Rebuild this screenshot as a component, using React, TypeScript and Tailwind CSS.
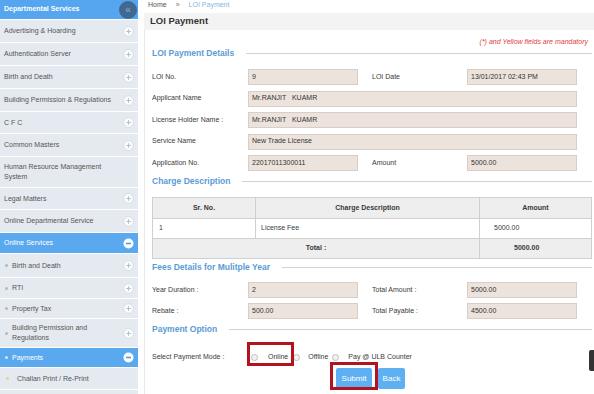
import React from 'react';

type Kind = 'top' | 'sub' | 'active' | 'activeSub' | 'leaf';
type Item = { label: string; h: string; kind: Kind; icon?: 'plus' | 'minus'; wrap?: string };

const items: Item[] = [
  { label: 'Advertising & Hoarding', h: 'h-[23px]', kind: 'top', icon: 'plus' },
  { label: 'Authentication Server', h: 'h-[23px]', kind: 'top', icon: 'plus' },
  { label: 'Birth and Death', h: 'h-[23px]', kind: 'top', icon: 'plus' },
  { label: 'Building Permission & Regulations', h: 'h-[23px]', kind: 'top', icon: 'plus' },
  { label: 'C F C', h: 'h-[22px]', kind: 'top', icon: 'plus' },
  { label: 'Common Masters', h: 'h-[23px]', kind: 'top', icon: 'plus' },
  { label: 'Human Resource Management System', h: 'h-[31px]', kind: 'top', wrap: 'max-w-[104px]' },
  { label: 'Legal Matters', h: 'h-[22px]', kind: 'top', icon: 'plus' },
  { label: 'Online Departmental Service', h: 'h-[23px]', kind: 'top', icon: 'plus' },
  { label: 'Online Services', h: 'h-[21px]', kind: 'active', icon: 'minus' },
  { label: 'Birth and Death', h: 'h-[24px]', kind: 'sub', icon: 'plus' },
  { label: 'RTI', h: 'h-[21px]', kind: 'sub', icon: 'plus' },
  { label: 'Property Tax', h: 'h-[20px]', kind: 'sub', icon: 'plus' },
  { label: 'Building Permission and Regulations', h: 'h-[29px]', kind: 'sub', icon: 'plus', wrap: 'max-w-[100px]' },
  { label: 'Payments', h: 'h-[20px]', kind: 'activeSub', icon: 'minus' },
  { label: 'Challan Print / Re-Print', h: 'h-[22px]', kind: 'leaf' },
];

function PlusIcon() {
  return (
    <svg width="11" height="11" viewBox="0 0 11 11" className="shrink-0">
      <circle cx="5.5" cy="5.5" r="4.8" fill="#fbfcfd" stroke="#d3d9df" strokeWidth="0.8" />
      <path d="M5.5 3.2v4.6M3.2 5.5h4.6" stroke="#b3bac2" strokeWidth="0.9" />
    </svg>
  );
}

function MinusIcon() {
  return (
    <svg width="11" height="11" viewBox="0 0 11 11" className="shrink-0">
      <circle cx="5.5" cy="5.5" r="5" fill="#ffffff" />
      <path d="M3 5.5h5" stroke="#4d9ee8" strokeWidth="1.6" />
    </svg>
  );
}

function SideRow({ item }: { item: Item }) {
  const active = item.kind === 'active' || item.kind === 'activeSub';
  return (
    <div
      className={`${item.h} flex items-center border-b border-white pr-[4px] leading-[10px] ${
        active ? 'bg-[#5aa9ef] text-white' : 'text-[#555]'
      } ${item.kind === 'leaf' ? 'pl-[6px]' : item.kind === 'top' || item.kind === 'active' ? 'pl-[4px]' : 'pl-[5px]'}`}
    >
      {(item.kind === 'sub' || item.kind === 'activeSub') && (
        <span className={`w-[3px] h-[3px] rounded-full mr-[4px] shrink-0 ${active ? 'bg-[#cfe5fa]' : 'bg-[#a9bccd]'}`} />
      )}
      {item.kind === 'leaf' && <span className="w-[3px] h-[3px] rounded-full mr-[8px] shrink-0 bg-[#e2d58f]" />}
      <div className="flex-1">
        <div className={item.wrap ?? ''}>{item.label}</div>
      </div>
      {item.icon === 'plus' && <PlusIcon />}
      {item.icon === 'minus' && <MinusIcon />}
    </div>
  );
}

function Sidebar() {
  return (
    <aside className="w-[138px] shrink-0 h-full bg-[#e5eaf0] flex flex-col">
      <div className="h-[20px] border-b border-white bg-[#55a6ee] flex items-center justify-between pl-[4px] pr-[1px]">
        <span className="font-bold text-white text-[7px]">Departmental Services</span>
        <span className="w-[18px] h-[18px] rounded-full bg-[#406890] flex items-center justify-center text-[#8fb0d0] text-[10px] leading-none">
          «
        </span>
      </div>
      {items.map((it, i) => (
        <SideRow key={i} item={it} />
      ))}
    </aside>
  );
}

function Section({ title, className = '' }: { title: string; className?: string }) {
  return (
    <div className={`flex items-center h-[12px] ${className}`}>
      <span className="text-[8.5px] font-bold text-[#5b9bd5] whitespace-nowrap">{title}</span>
      <div className="flex-1 ml-[12px] border-t border-[#d2d2d2]" />
    </div>
  );
}

function Field({ value, wide }: { value: string; wide?: boolean }) {
  return (
    <div
      className={`h-[16px] bg-[#ede3dd] border border-[#d9cdc7] pl-[3px] flex items-center whitespace-pre text-[7px] text-[#333] ${
        wide ? 'w-[329px]' : 'w-[110px]'
      }`}
    >
      {value}
    </div>
  );
}

function Row({ label, value, label2, value2, wide }: { label: string; value: string; label2?: string; value2?: string; wide?: boolean }) {
  return (
    <div className="flex items-center h-[16px]">
      <span className="w-[96px] shrink-0">{label}</span>
      <Field value={value} wide={wide} />
      {label2 && (
        <>
          <span className="w-[14px]" />
          <span className="w-[95px] shrink-0">{label2}</span>
          <Field value={value2 ?? ''} />
        </>
      )}
    </div>
  );
}

function Radio() {
  return <span className="w-[7px] h-[7px] rounded-full border border-[#bdbdbd] bg-[#f1f1f1] shrink-0" />;
}

export default function App() {
  return (
    <div className="relative flex w-[594px] h-[394px] overflow-hidden bg-white font-['Liberation_Sans',Arial,sans-serif] text-[7px] text-[#3a3a3a]">
      <Sidebar />
      <main className="flex-1 ml-[6px] flex flex-col">
        <div className="h-[11px] pl-[4px] flex items-center text-[#555]">
          Home<span className="mx-[9px] text-[#777]">»</span>
          <span className="text-[#86b6e2]">LOI Payment</span>
        </div>
        <div className="mt-[2px] h-[17px] bg-[#f3f3f3] pl-[6px] flex items-center text-[9.5px] font-bold text-[#333]">
          LOI Payment
        </div>
        <div className="flex-1 border-l border-[#e8e8e8] pl-[7px] pr-[2px] pt-[7px] flex flex-col">
          <div className="h-[10px] leading-[10px] text-right italic text-[#e03a44] pr-[4px]">
            (*) and Yellow fields are mandatory
          </div>
          <Section title="LOI Payment Details" />
          <div className="mt-[10px] flex flex-col gap-[5.5px]">
            <Row label="LOI No." value="9" label2="LOI Date" value2="13/01/2017 02:43 PM" />
            <Row label="Applicant Name" value="Mr.RANJIT   KUAMR" wide />
            <Row label="License Holder Name :" value="Mr.RANJIT   KUAMR" wide />
            <Row label="Service Name" value="New Trade License" wide />
            <Row label="Application No." value="22017011300011" label2="Amount" value2="5000.00" />
          </div>
          <Section title="Charge Description" className="mt-[4px]" />
          <table className="mt-[10px] w-full border-collapse text-[7px]">
            <tbody>
              <tr className="h-[21px] bg-[#eeeeee] font-bold">
                <td className="w-[103px] border border-[#cfcfcf] text-center">Sr. No.</td>
                <td className="w-[224px] border border-[#cfcfcf] text-center">Charge Description</td>
                <td className="border border-[#cfcfcf] text-center">Amount</td>
              </tr>
              <tr className="h-[20px] bg-white">
                <td className="border border-[#cfcfcf] pl-[6px]">1</td>
                <td className="border border-[#cfcfcf] pl-[5px]">License Fee</td>
                <td className="border border-[#cfcfcf] pl-[14px]">5000.00</td>
              </tr>
              <tr className="h-[20px] bg-[#eeeeee] font-bold">
                <td colSpan={2} className="border border-[#cfcfcf] text-center">Total :</td>
                <td className="border border-[#cfcfcf] pl-[34px]">5000.00</td>
              </tr>
            </tbody>
          </table>
          <Section title="Fees Details for Mulitple Year" className="mt-[2px]" />
          <div className="mt-[9px] flex flex-col gap-[5px]">
            <Row label="Year Duration :" value="2" label2="Total Amount :" value2="5000.00" />
            <Row label="Rebate :" value="500.00" label2="Total Payable :" value2="4500.00" />
          </div>
          <Section title="Payment Option" className="mt-[4px]" />
          <div className="relative mt-[14px] h-[16px] flex items-center">
            <span className="w-[99px] shrink-0">Select Payment Mode :</span>
            <Radio />
            <span className="ml-[10px]">Online</span>
            <span className="ml-[5px] flex"><Radio /></span>
            <span className="ml-[8px]">Offline</span>
            <span className="ml-[4px] flex"><Radio /></span>
            <span className="ml-[9px]">Pay @ ULB Counter</span>
            <div className="absolute left-[95px] -top-[7px] w-[47px] h-[24px] border-[3px] border-[#b3131f]" />
          </div>
          <div className="mt-[3px] pl-[184px] flex gap-[6px]">
            <div className="relative w-[36px] h-[21px] rounded-[2px] bg-[#5fb0f2] text-white text-[8px] flex items-center justify-center">
              Submit
              <div className="absolute -left-[6px] -top-[6px] w-[48px] h-[28px] border-[3px] border-[#b3131f]" />
            </div>
            <div className="w-[27px] h-[21px] rounded-[2px] bg-[#5fb0f2] text-white text-[8px] flex items-center justify-center">
              Back
            </div>
          </div>
        </div>
      </main>
      <div className="absolute right-0 top-[350px] w-[5px] h-[21px] bg-[#333] rounded-l-[2px]" />
    </div>
  );
}
